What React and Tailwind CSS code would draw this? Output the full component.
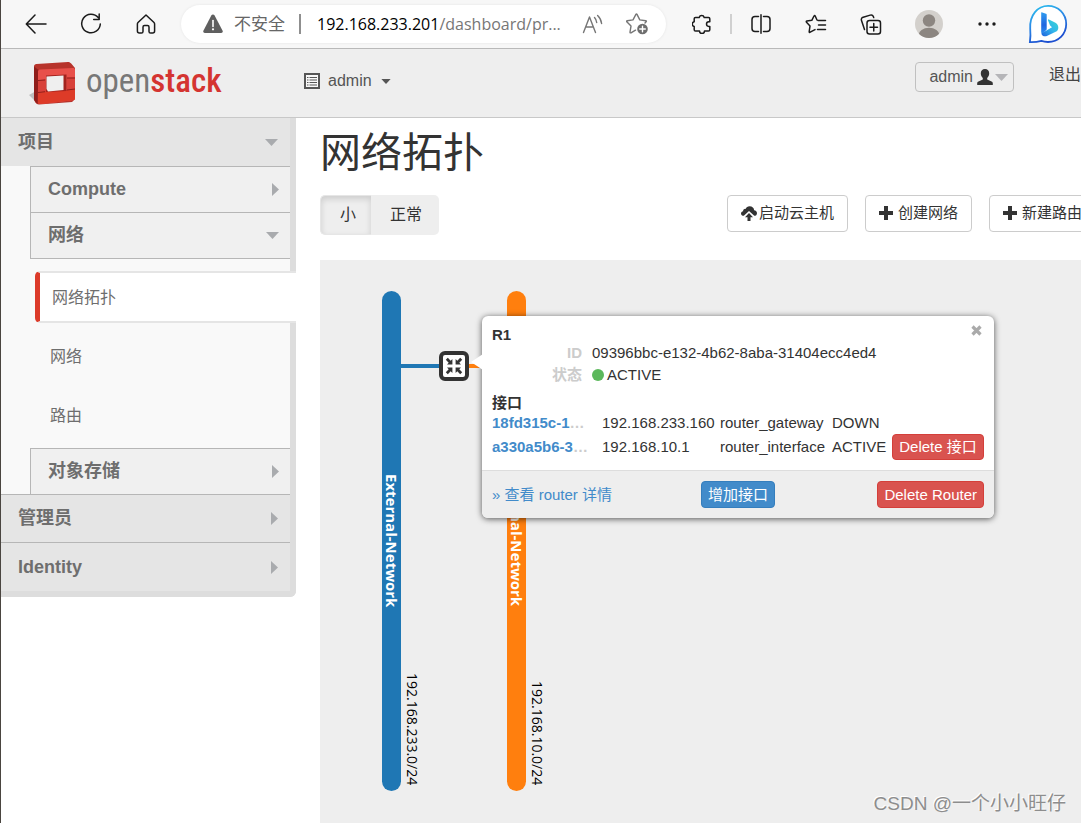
import React from "react";

const stroke = {
  fill: "none",
  stroke: "currentColor",
  strokeWidth: 1.5,
  strokeLinecap: "round",
  strokeLinejoin: "round",
};

function ToolButton({ label, className = "w-[55px]", children }) {
  return (
    <button type="button" aria-label={label} className={`flex h-10 shrink-0 items-center justify-center text-[#1b1b1b] ${className}`}>
      {children}
    </button>
  );
}

function BingLogo() {
  return (
    <svg width="40" height="40" viewBox="0 0 40 40" aria-hidden="true">
      <defs>
        <linearGradient id="bubble" x1="0" y1="0" x2="0.4" y2="1">
          <stop offset="0" stopColor="#2cc3ee" />
          <stop offset="0.5" stopColor="#2b8be6" />
          <stop offset="1" stopColor="#1d4fd0" />
        </linearGradient>
        <linearGradient id="stem" x1="0" y1="0" x2="0" y2="1">
          <stop offset="0" stopColor="#2f9df0" />
          <stop offset="0.6" stopColor="#2166e0" />
          <stop offset="1" stopColor="#2a8df0" />
        </linearGradient>
        <linearGradient id="bowl" x1="1" y1="0" x2="0" y2="1">
          <stop offset="0" stopColor="#38d6d0" />
          <stop offset="0.5" stopColor="#31b5ec" />
          <stop offset="1" stopColor="#1f5fdc" />
        </linearGradient>
      </defs>
      <path
        d="M20 1.8C30.3 1.8 38.2 9.8 38.2 20S30.3 38 20 38c-2.600 0-4.700-.4-6.600-1.100C9.500 38 5 38.300 1.900 38.200 2.500 34 2.600 29 2.200 24.500 1.500 11 9.700 1.800 20 1.800Z"
        fill="#fff"
        stroke="url(#bubble)"
        strokeWidth="1.800"
      />
      <path d="M13.600 8.200 18 9.800a1 1 0 0 1 .7 1V25.500L14.800 29.500a1.400 1.400 0 0 1-1.600-1.300V8.500Z" fill="url(#stem)" />
      <path d="M20.400 15.200 27 18.500c2.300 1.200 3.400 3 3.300 5.200-.1 1.600-.8 3-2.100 3.900L18.800 32c-2.200.9-4.900-.2-5.500-2.600L24 23.300l-1.900-1.800-2.200-5.400Z" fill="url(#bowl)" />
    </svg>
  );
}

function BrowserBar() {
  return (
    <div className="flex h-[49px] items-center border-b border-[#b9b9b9] bg-[#f7f7f7] pl-[7px] font-['Open_Sans','Noto_Sans_CJK_SC',sans-serif]">
      <ToolButton label="返回">
        <svg width="22" height="20" viewBox="0 0 22 20" {...stroke}>
          <path d="M21 10H1.500M10 1 1.300 10 10 19" />
        </svg>
      </ToolButton>
      <ToolButton label="刷新">
        <svg width="22" height="22" viewBox="0 0 22 22" {...stroke}>
          <path d="M18.200 4.600A9.300 9.300 0 1 0 20.300 11M19.200 1v5.500h-5.500" />
        </svg>
      </ToolButton>
      <ToolButton label="主页">
        <svg width="20" height="20" viewBox="0 0 20 20" {...stroke}>
          <path d="M2 8.500 10 1l8 7.500c.4.400.6.800.6 1.400V17c0 1.200-.7 2-2 2h-2c-1 0-1.600-.6-1.600-1.600V13c0-1-.6-1.600-1.500-1.600h-3C7.600 11.400 7 12 7 13v4.400C7 18.400 6.400 19 5.400 19h-2c-1.300 0-2-.8-2-2V9.900c0-.6.200-1 .6-1.400Z" />
        </svg>
      </ToolButton>
      <div className="ml-2 flex h-[38px] min-w-0 flex-1 items-center rounded-full bg-white pr-4 pl-[21px] shadow-[0_0_3px_rgba(0,0,0,0.08)]">
        <svg width="22" height="20" viewBox="0 0 22 20" aria-hidden="true" className="shrink-0">
          <path d="M9.300 1.500c.7-1.300 2.600-1.300 3.300 0l8 15.200c.6 1.200-.2 2.300-1.600 2.300H3c-1.400 0-2.200-1.100-1.600-2.300Z" fill="#5f5f5f" />
          <path d="M11 6.500v6" stroke="#fff" strokeWidth="1.600" strokeLinecap="round" />
          <circle cx="11" cy="15.300" r="1.100" fill="#fff" />
        </svg>
        <span className="ml-[10px] shrink-0 text-[17px] whitespace-nowrap text-[#666]">不安全</span>
        <span className="ml-[14px] h-5 w-0.5 shrink-0 bg-[#8f8f8f]" />
        <span className="ml-4 min-w-0 flex-1 truncate text-[16px] text-[#767676]">
          <span className="text-black">192.168.233.201</span>/dashboard/pr...
        </span>
        <button type="button" aria-label="朗读此页内容" className="shrink-0 text-[#767676]">
          <svg width="22" height="20" viewBox="0 0 22 20" {...stroke} strokeWidth="1.400">
            <path d="m1.500 18.500 6-15.500 6 15.500M3.600 13h7.800M12.500 3.500c1.300 1.400 2 3 2.200 5M15.600 1.500c2.200 2 3.600 4.600 4 8" />
          </svg>
        </button>
        <button type="button" aria-label="收藏此页" className="ml-[22px] shrink-0 text-[#767676]">
          <svg width="24" height="22" viewBox="0 0 24 22" {...stroke} strokeWidth="1.400">
            <path d="M9.500 17.200 5 19.800c-.7.300-1.100 0-1-.7l1-6-4.200-4.300c-.5-.5-.3-1 .4-1.100L7 6.900l2.900-5.500c.3-.6.800-.6 1.100 0l2.800 5.500 5.900.8c.7.100.9.600.4 1.100L19 10" />
            <circle cx="16.500" cy="16" r="5.300" fill="#6e6e6e" stroke="none" />
            <path d="M16.500 13.200v5.600M13.700 16h5.600" stroke="#fff" />
          </svg>
        </button>
      </div>
      <div className="ml-[9px] flex shrink-0 items-center">
        <ToolButton label="扩展" className="w-[54px]">
          <svg width="20" height="20" viewBox="0 0 20 20" {...stroke}>
            <path d="M3.500 3.500h3.700a2.600 2.600 0 0 1 5 0h4.300c.8 0 1.300.5 1.300 1.300v3h-1a2.300 2.300 0 0 0 0 4.600h1v3.300c0 .8-.5 1.300-1.300 1.300h-4a2.500 2.500 0 0 1-5 0h-4c-.8 0-1.300-.5-1.300-1.300v-3.200a2.400 2.400 0 0 1 0-4.700v-3c0-.8.500-1.300 1.300-1.300Z" />
          </svg>
        </ToolButton>
        <span className="mx-px h-5 w-0.5 bg-[#d0d0d0]" />
        <ToolButton label="分屏">
          <svg width="20" height="20" viewBox="0 0 20 20" {...stroke}>
            <path d="M7.500 2.500H4C2 2.500 1 3.500 1 5.500v9c0 2 1 3 3 3h3.500M12.500 2.500H16c2 0 3 1 3 3v9c0 2-1 3-3 3h-3.500M10 .8v18.400" />
          </svg>
        </ToolButton>
        <ToolButton label="收藏夹">
          <svg width="22" height="20" viewBox="0 0 22 20" {...stroke}>
            <path d="M13 6.500h7.500M13.500 11h7M12.500 15.500h8M12 6 10.200 2c-.3-.7-.9-.7-1.200 0L6.800 6.300l-4.900.8c-.7.100-.9.700-.4 1.200L5 12l-.8 5.500c-.1.800.4 1.100 1 .7L10 15.600" />
          </svg>
        </ToolButton>
        <ToolButton label="集锦">
          <svg width="22" height="21" viewBox="0 0 22 21" {...stroke}>
            <rect x="7" y="6.500" width="13.500" height="13.500" rx="2.500" />
            <path d="M13.750 9.500v7.500M10 13.250h7.500M4.500 15.500 1.500 6.500c-.5-1.600.1-2.700 1.700-3.200l7-2.200c1.500-.5 2.600 0 3.200 1.500l.3 1" />
          </svg>
        </ToolButton>
        <ToolButton label="个人资料" className="w-[61px]">
          <svg width="28" height="28" viewBox="0 0 28 28">
            <defs>
              <clipPath id="avatar"><circle cx="14" cy="14" r="14" /></clipPath>
            </defs>
            <g clipPath="url(#avatar)">
              <rect width="28" height="28" fill="#d3d0cc" />
              <circle cx="14" cy="10.500" r="6.200" fill="#8c8681" />
              <ellipse cx="14" cy="25" rx="10.500" ry="7.200" fill="#8c8681" />
            </g>
          </svg>
        </ToolButton>
        <ToolButton label="设置及其他" className="w-[55px]">
          <svg width="18" height="4" viewBox="0 0 18 4" fill="currentColor">
            <circle cx="2" cy="2" r="1.700" /><circle cx="9" cy="2" r="1.700" /><circle cx="16" cy="2" r="1.700" />
          </svg>
        </ToolButton>
        <ToolButton label="必应" className="w-[67px]"><BingLogo /></ToolButton>
      </div>
    </div>
  );
}

function OpenStackMark() {
  return (
    <svg width="48" height="44" viewBox="0 0 48 44" aria-hidden="true">
      <path d="M0 34 7 30v11Z" fill="#000" opacity=".2" />
      <path d="M5 5.500C5 4 6 3.200 7.500 3L39 1c1.500 0 2.300.5 3.200 1.600L46 7v31L43 41 10 43.500C8 43.500 7 42.500 6 41l-1-3Z" fill="#b7332b" />
      <path d="M5 5.500 9.500 9 8.500 43 5 39Z" fill="#8f1d1a" />
      <path d="M11 8.500 44 7c1.400 0 2 .6 2 2v28c0 1.500-.7 2.200-2 2.300L12 43c-2 .2-3-.7-3-2.500V11c0-1.500.7-2.400 2-2.500Z" fill="#e8504a" />
      <path d="M9 19.500 17 18v12L9 31ZM38 17l8-.8V28l-8 1Z" fill="#d8413a" />
      <path d="M9 31.500 17 30l21-1 8-1v9c0 1.500-.7 2.200-2 2.300L12 43c-2 .2-3-.7-3-2.500Z" fill="#dd3b28" />
      <path d="M17 14.500 37.500 13.500v16.500L17 31Z" fill="#a3231e" />
      <path d="M17.500 15.500 34.500 14.500v14.500L19 30.500 17.500 28Z" fill="#efefef" />
      <path d="M9 19.500 16 19M9 31.500l7-.8M38 17h8M38 29l8-1" stroke="#8f1d1a" strokeWidth="1" />
    </svg>
  );
}

function Caret({ dir = "down", className = "text-[#a9abae]" }) {
  return dir === "down" ? (
    <svg width="13" height="7" viewBox="0 0 13 7" className={`shrink-0 ${className}`} fill="currentColor" aria-hidden="true"><path d="M0 0h13L6.500 7Z" /></svg>
  ) : (
    <svg width="7" height="13" viewBox="0 0 7 13" className={`shrink-0 ${className}`} fill="currentColor" aria-hidden="true"><path d="M0 0v13l7-6.500Z" /></svg>
  );
}

function Header() {
  return (
    <header className="flex h-[69px] items-start border-b border-[#c8c8c8] bg-[#eee] pr-[15px] pl-7 text-[#555]">
      <a href="#home" aria-label="openstack" className="mt-3 flex w-[275px] items-center">
        <OpenStackMark />
        <span className="ml-[9px] pb-1 font-['Roboto_Condensed','Open_Sans_Condensed','Open_Sans',sans-serif] text-[33px] leading-[40px] text-[#777]">
          open<span className="font-medium text-[#d43431]">stack</span>
        </span>
      </a>
      <button type="button" className="mt-5 flex items-center text-[16px] leading-6">
        <svg width="16" height="16" viewBox="0 0 16 16" aria-hidden="true">
          <rect x="1" y="1" width="14" height="14" fill="#f8f8f8" stroke="#555" strokeWidth="2" />
          <path d="M3 4.500h1.500M3 7h1.500M3 9.500h1.500M3 12h1.500M5.500 4.500H13M5.500 7H13M5.500 9.500H13M5.500 12H13" stroke="#555" />
        </svg>
        <span className="ml-2">admin</span>
        <Caret className="ml-[9px] h-[5px] w-[10px] text-[#555]" />
      </button>
      <button type="button" className="mt-[13px] ml-auto flex h-[30px] items-center rounded-[4px] border border-[#c0c0c0] pr-[5px] pl-[13px] text-[16px]">
        admin
        <svg width="16" height="16" viewBox="0 0 16 16" className="ml-1" fill="#333" aria-hidden="true">
          <path d="M8 0c2.600 0 4.200 1.700 4.200 4.200 0 1.900-.8 3.600-2 4.700v1.700l4.300 2c.9.400 1.300.9 1.300 1.700V16H.2v-1.700c0-.8.4-1.300 1.300-1.700l4.300-2V8.900c-1.200-1.100-2-2.800-2-4.700C3.800 1.700 5.400 0 8 0Z" />
        </svg>
        <Caret className="ml-[2px] text-[#b5b5b8]" />
      </button>
      <a href="#logout" className="mt-[13px] ml-[35px] shrink-0 text-[16px] leading-[26px] text-[#444]">退出</a>
    </header>
  );
}

function TopItem({ label, dir, className }) {
  return (
    <button type="button" className={`flex w-full items-center justify-between bg-[#e5e5e5] pr-3 pl-[17px] text-left text-[18px] font-bold ${className}`}>
      {label}<Caret dir={dir} />
    </button>
  );
}

function SubItem({ label, dir, className = "h-[46px]" }) {
  return (
    <div className="pl-[29px]">
      <button type="button" className={`flex w-full items-center justify-between border-t border-l border-[#b6b6b6] bg-[#f0f0f0] pr-[11px] pl-[17px] text-left text-[18px] font-bold ${className}`}>
        {label}<Caret dir={dir} />
      </button>
    </div>
  );
}

function Sidebar() {
  return (
    <nav className="w-[295px] shrink-0 self-start rounded-br-[6px] border-r-[6px] border-b-[6px] border-[#ddd] bg-[#f9f9f9] text-[#6e6e6e]">
      <TopItem label="项目" dir="down" className="h-12" />
      <SubItem label="Compute" dir="right" />
      <SubItem label="网络" dir="down" className="h-[47px] border-b" />
      <ul className="flex flex-col gap-[7px] pt-3 pb-[7px] text-[16px] leading-6">
        <li className="relative -mr-[6px] ml-[34px]">
          <a href="#topology" className="flex h-[52px] items-center rounded-l-[5px] border-y-2 border-l-[5px] border-y-[#e5e5e5] border-l-[#dc3b2a] bg-white pt-0.5 pl-3">网络拓扑</a>
        </li>
        <li><a href="#networks" className="flex h-[52px] items-center pt-0.5 pl-[49px]">网络</a></li>
        <li><a href="#routers" className="flex h-[52px] items-center pt-0.5 pl-[49px]">路由</a></li>
      </ul>
      <SubItem label="对象存储" dir="right" />
      <TopItem label="管理员" dir="right" className="h-12 border-t border-[#b6b6b6]" />
      <TopItem label="Identity" dir="right" className="h-[49px] border-t border-[#b6b6b6]" />
    </nav>
  );
}

function Plus() {
  return (
    <svg width="14" height="14" viewBox="0 0 14 14" fill="#333" aria-hidden="true">
      <path d="M5 0h4v5h5v4H9v5H5V9H0V5h5Z" />
    </svg>
  );
}

function ActionButton({ icon, children }) {
  return (
    <button type="button" className="flex h-[37px] shrink-0 items-center rounded-[4px] border border-[#ccc] bg-white px-[13px] pb-px text-[15px] whitespace-nowrap text-[#333]">
      {icon}{children}
    </button>
  );
}

function NetworkBar({ name, cidr, className, barClass }) {
  return (
    <div className={`absolute top-[31px] flex h-[500px] items-end gap-[2px] font-['Open_Sans',sans-serif] leading-[19px] ${className}`}>
      <div className={`flex h-full w-[19px] items-center justify-center rounded-full text-[15px] font-bold text-white [writing-mode:vertical-rl] ${barClass}`}>{name}</div>
      <div className="pb-[6px] text-[14px] text-black [writing-mode:vertical-rl]">{cidr}</div>
    </div>
  );
}

const ports = [
  { id: "18fd315c-1", ip: "192.168.233.160", type: "router_gateway", status: "DOWN" },
  { id: "a330a5b6-3", ip: "192.168.10.1", type: "router_interface", status: "ACTIVE", removable: true },
];

function RouterPopup() {
  return (
    <section aria-label="R1" className="absolute top-[56px] left-[162px] w-[512px] rounded-[6px] bg-white text-[15px] leading-[22px] text-[#333] shadow-[0_1px_6px_rgba(0,0,0,0.65)]">
      <svg width="12" height="16" viewBox="0 0 12 16" className="absolute top-[38px] -left-[11px]" aria-hidden="true">
        <path d="M12 0v16L0 8Z" fill="#fff" />
      </svg>
      <button type="button" aria-label="关闭" className="absolute top-[9px] right-[12px]">
        <svg width="11" height="11" viewBox="0 0 11 11" className="block"><path d="m1.500 1.500 8 8m0-8-8 8" stroke="#aaa" strokeWidth="3.200" /></svg>
      </button>
      <div className="px-[10px] pt-2 pb-[10px]">
        <h2 className="font-bold">R1</h2>
        <dl className="-mt-[4px] grid grid-cols-[90px_1fr] gap-x-[10px]">
          <dt className="text-right font-bold text-[#ccc]">ID</dt>
          <dd>09396bbc-e132-4b62-8aba-31404ecc4ed4</dd>
          <dt className="text-right font-bold text-[#ccc]">状态</dt>
          <dd className="flex items-center gap-[3px]"><span className="h-3 w-3 rounded-full bg-[#5cb85c]" />ACTIVE</dd>
        </dl>
        <h3 className="mt-2 leading-[18px] font-bold">接口</h3>
        <table className="w-full table-fixed text-left">
          <colgroup>
            <col className="w-[110px]" /><col className="w-[118px]" /><col className="w-[112px]" /><col className="w-[60px]" /><col />
          </colgroup>
          <tbody>
            {ports.map((p) => (
              <tr key={p.id} className="h-[26px] first:h-[22px]">
                <th scope="row" className="p-0 font-bold text-[#ccc]"><a href="#port" className="text-[#428bca]">{p.id}</a>…</th>
                <td className="p-0">{p.ip}</td>
                <td className="p-0">{p.type}</td>
                <td className="p-0">{p.status}</td>
                <td className="p-0">
                  {p.removable && (
                    <button type="button" className="flex h-[26px] w-full items-center justify-center rounded-[4px] border border-[#d43f3a] bg-[#d9534f] whitespace-nowrap text-white">Delete 接口</button>
                  )}
                </td>
              </tr>
            ))}
          </tbody>
        </table>
      </div>
      <footer className="grid h-12 grid-cols-3 items-center rounded-b-[6px] border-t border-[#ddd] bg-[#eee] px-[10px]">
        <a href="#router" className="text-[#428bca]">» 查看 router 详情</a>
        <button type="button" className="h-[27px] justify-self-center rounded-[4px] border border-[#357ebd] bg-[#428bca] px-[6px] text-white">增加接口</button>
        <button type="button" className="h-[27px] justify-self-end rounded-[4px] border border-[#d43f3a] bg-[#d9534f] px-[6px] text-white">Delete Router</button>
      </footer>
    </section>
  );
}

function Topology() {
  return (
    <div className="relative mt-[25px] min-h-[563px] flex-1 bg-[#eee]">
      <NetworkBar name="External-Network" cidr="192.168.233.0/24" className="left-[62px]" barClass="bg-[#1f77b4]" />
      <NetworkBar name="Internal-Network" cidr="192.168.10.0/24" className="left-[187px]" barClass="bg-[#ff7f0e]" />
      <div className="absolute top-[104px] left-[81px] h-1 w-10 bg-[#1f77b4]" />
      <div className="absolute top-[104px] left-[148px] h-1 w-10 bg-[#ff7f0e]" />
      <svg width="30" height="30" viewBox="0 0 30 30" className="absolute top-[91px] left-[119px]" aria-label="R1">
        <rect x="2" y="2" width="26" height="26" rx="4" fill="#fff" stroke="#333" strokeWidth="4" />
        <g fill="#333">
          <path d="M13.400 13.400h-5.400l1.700-1.700L6.800 8.800l2-2 2.900 2.900 1.700-1.700Z" />
          <path d="M16.600 13.400h5.400l-1.700-1.700 2.900-2.900-2-2-2.900 2.900-1.700-1.700Z" />
          <path d="M13.400 16.600h-5.400l1.700 1.700-2.900 2.900 2 2 2.900-2.900 1.700 1.700Z" />
          <path d="M16.600 16.600h5.400l-1.700 1.700 2.900 2.900-2 2-2.900-2.900-1.700 1.700Z" />
        </g>
      </svg>
      <RouterPopup />
    </div>
  );
}

export default function App() {
  return (
    <div className="relative flex min-h-screen flex-col overflow-hidden border-l border-[#4a4540] bg-white font-['Liberation_Sans','Noto_Sans_CJK_SC',sans-serif]">
      <BrowserBar />
      <div className="flex min-w-[1095px] flex-1 flex-col">
        <Header />
        <div className="flex flex-1">
          <Sidebar />
          <main className="flex flex-1 flex-col pl-6 text-[#333]">
            <h1 className="mt-2 text-[41px] leading-[54px]">网络拓扑</h1>
            <div className="mt-[15px] flex items-start">
              <div className="flex h-10 overflow-hidden rounded-[5px] bg-[#eee] text-[16px]">
                <button type="button" className="w-[51px] rounded-l-[5px] border border-r-0 border-[#e6e6e6] pl-1 shadow-[inset_0_3px_6px_rgba(0,0,0,0.14)]">小</button>
                <button type="button" className="w-[68px] pl-[2px]">正常</button>
              </div>
              <div className="ml-auto flex gap-[17px] [&_svg]:mr-[5px]">
                <ActionButton
                  icon={
                    <svg width="16" height="15" viewBox="0 0 16 16" preserveAspectRatio="none" fill="#333" aria-hidden="true">
                      <path d="M2.800 10.500C1.200 10.500 0 9.500 0 8c0-1.300.9-2.300 2.100-2.500C2 3.900 3.300 2.800 4.700 3.100 5.300 1.200 6.700.3 8.600.3c2.700 0 4.400 1.800 4.500 4.200 1.700.2 2.900 1.400 2.900 3.100s-1.200 2.900-2.700 2.900L8 5.400Z" />
                      <path d="M8 7.500 12 12H9.500v4h-3v-4H4Z" />
                    </svg>
                  }
                >
                  <span className="-ml-[3px]">启动云主机</span>
                </ActionButton>
                <ActionButton icon={<Plus />}>创建网络</ActionButton>
                <ActionButton icon={<Plus />}>新建路由</ActionButton>
              </div>
            </div>
            <Topology />
          </main>
        </div>
      </div>
      <div className="absolute right-[15px] bottom-1 text-[19px] leading-[30px] text-[#8d8d8d] [text-shadow:-1px_-1px_0_#fff]">CSDN @一个小小旺仔</div>
    </div>
  );
}
